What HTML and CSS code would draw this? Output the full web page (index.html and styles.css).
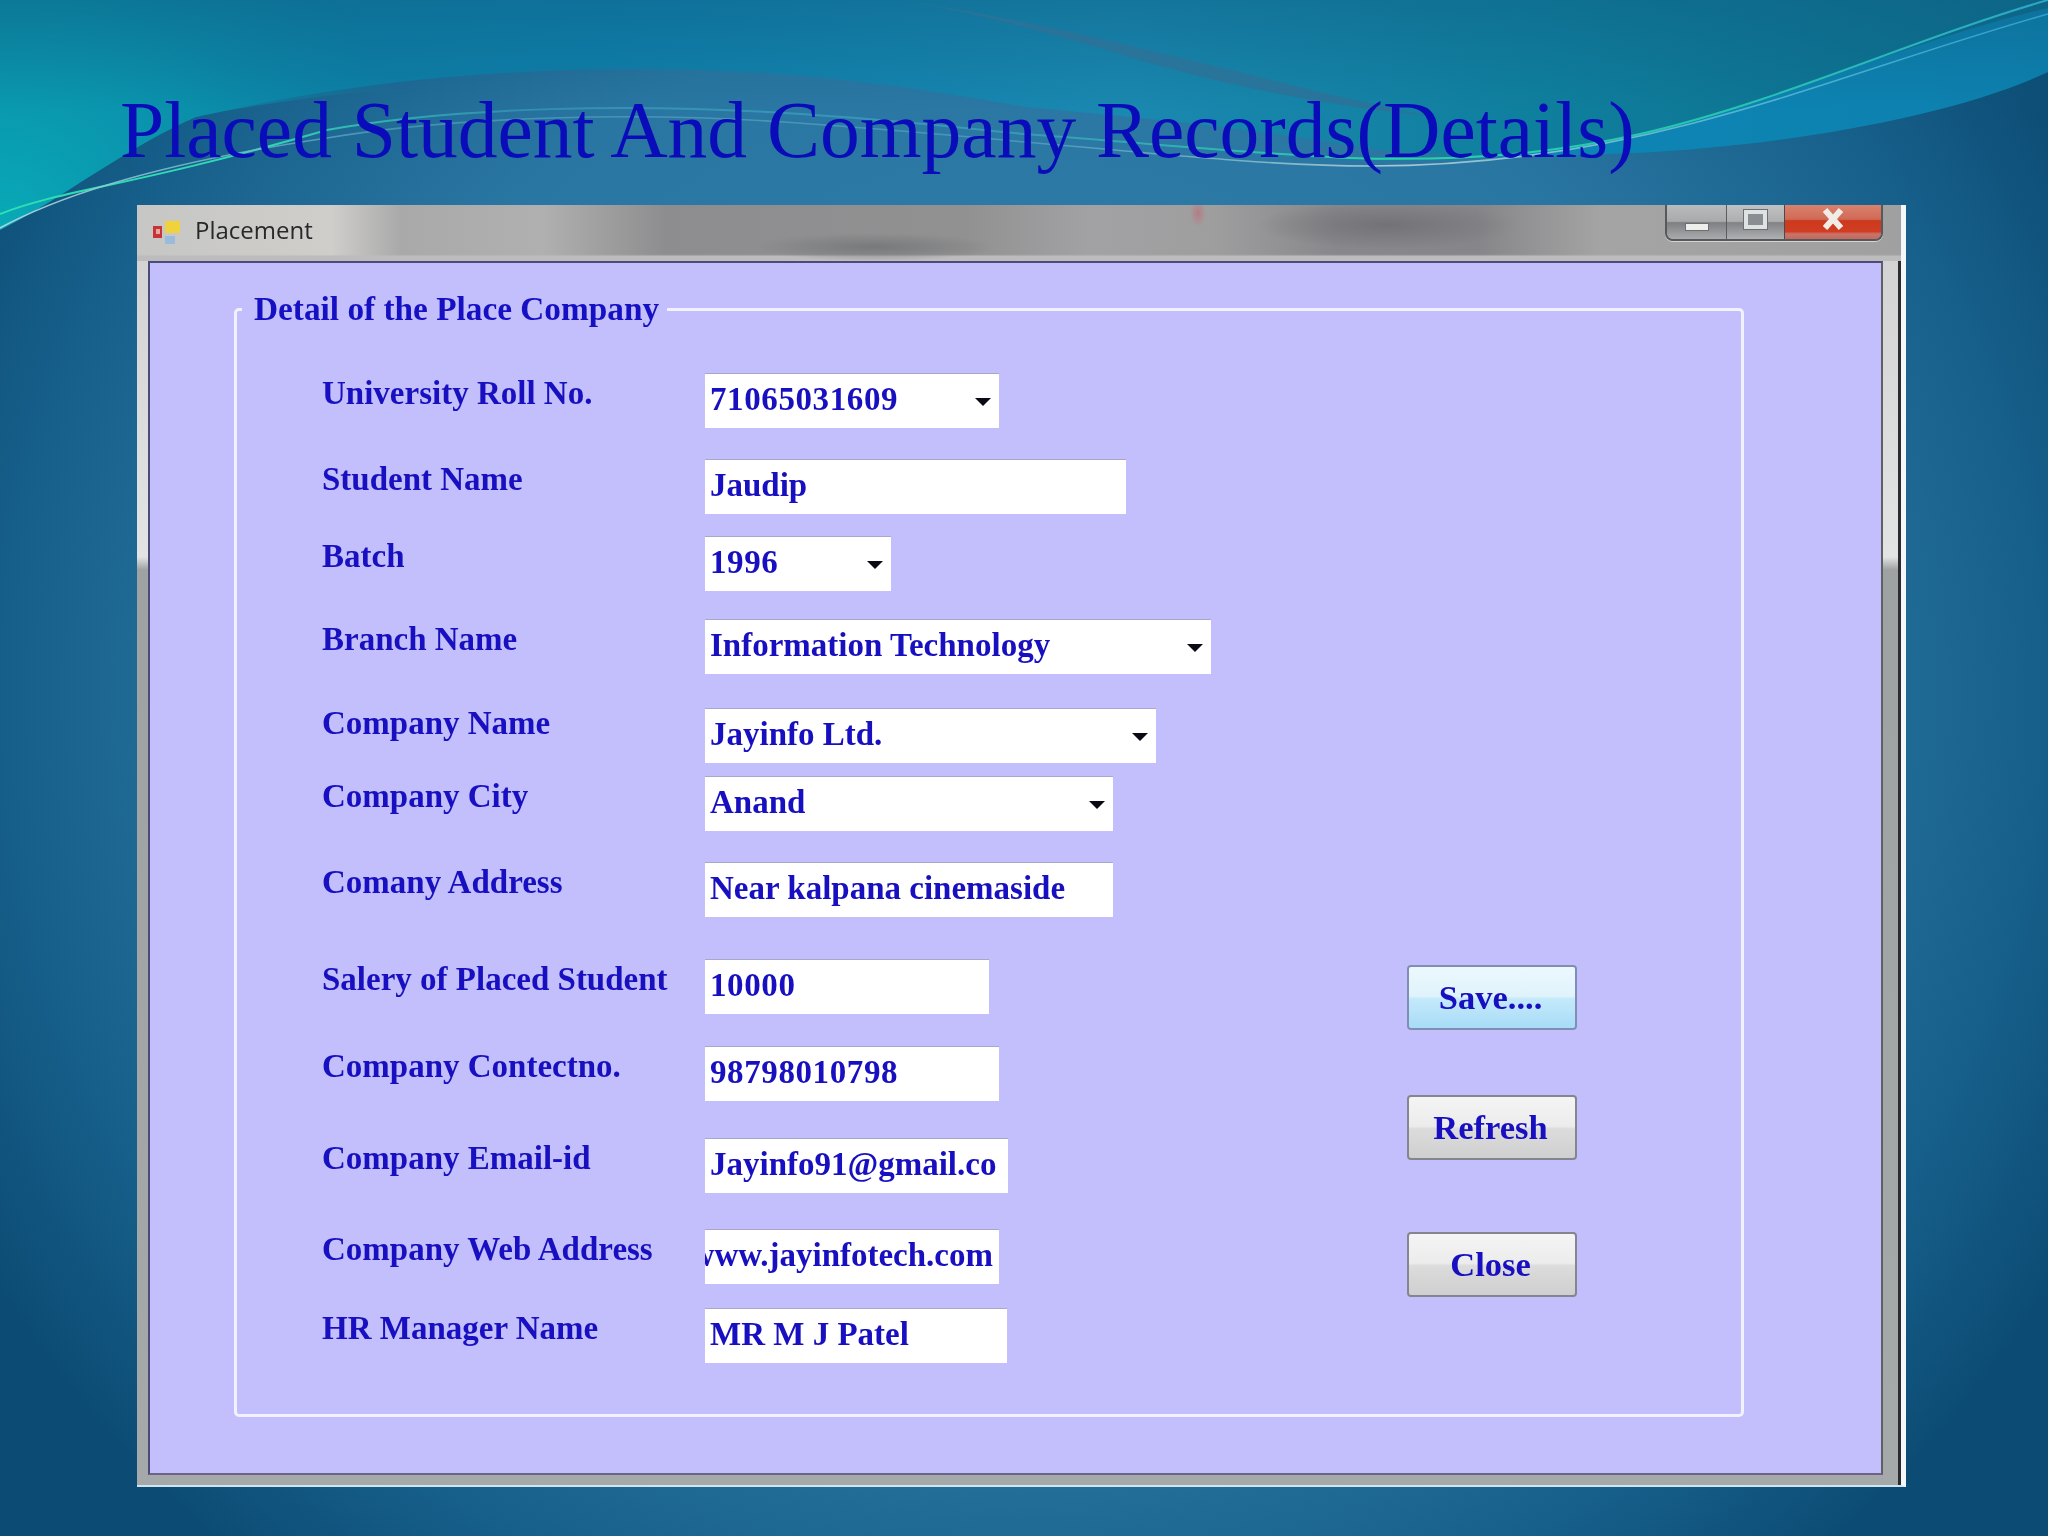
FILE: index.html
```html
<!DOCTYPE html>
<html lang="en">
<head>
<meta charset="utf-8">
<title>Placed Student And Company Records(Details)</title>
<link rel="stylesheet" href="styles.css">
</head>
<body>
<main class="slide">
  <svg class="backdrop" viewBox="0 0 2048 1536" preserveAspectRatio="none" aria-hidden="true">
    <defs>
      <linearGradient id="bandFill" gradientUnits="userSpaceOnUse" x1="0" y1="0" x2="2048" y2="0">
        <stop offset="0" stop-color="#0c7c9e"/>
        <stop offset="0.3" stop-color="#0e80ac"/>
        <stop offset="0.55" stop-color="#1a88b0"/>
        <stop offset="0.75" stop-color="#0f7f9e"/>
        <stop offset="1" stop-color="#0d6a88"/>
      </linearGradient>
      <radialGradient id="tealGlow" gradientUnits="userSpaceOnUse" cx="0" cy="230" r="420">
        <stop offset="0" stop-color="#08aab8" stop-opacity="1"/>
        <stop offset="0.55" stop-color="#0a96ae" stop-opacity="0.7"/>
        <stop offset="1" stop-color="#0a8aa8" stop-opacity="0"/>
      </radialGradient>
      <linearGradient id="topShade" gradientUnits="userSpaceOnUse" x1="0" y1="0" x2="0" y2="110">
        <stop offset="0" stop-color="#0e5f84" stop-opacity="0.45"/>
        <stop offset="1" stop-color="#0e5f84" stop-opacity="0"/>
      </linearGradient>
      <linearGradient id="lineA" gradientUnits="userSpaceOnUse" x1="0" y1="0" x2="2048" y2="0">
        <stop offset="0" stop-color="#2fe0b0"/>
        <stop offset="0.13" stop-color="#2fd8b4"/>
        <stop offset="0.25" stop-color="#3fa6c4" stop-opacity="0.55"/>
        <stop offset="0.5" stop-color="#3fb0c4" stop-opacity="0.6"/>
        <stop offset="0.68" stop-color="#25d6a8"/>
        <stop offset="0.85" stop-color="#25c4b0"/>
        <stop offset="1" stop-color="#2ba6c8"/>
      </linearGradient>
      <linearGradient id="lineB" gradientUnits="userSpaceOnUse" x1="0" y1="0" x2="2048" y2="0">
        <stop offset="0" stop-color="#a8d4dc"/>
        <stop offset="0.2" stop-color="#58a8c4" stop-opacity="0.6"/>
        <stop offset="0.5" stop-color="#5eaac8" stop-opacity="0.6"/>
        <stop offset="0.68" stop-color="#a4c8d4"/>
        <stop offset="0.85" stop-color="#4fb4d0"/>
        <stop offset="1" stop-color="#30a0cc"/>
      </linearGradient>
    </defs>
    <path d="M0 0H2048V72C1950 118 1780 146 1632 153C1500 158 1420 158 1330 142C1200 122 1080 112 1025 107C900 84 780 68 620 69C470 70 330 86 196 117C130 145 60 200 0 230Z" fill="url(#bandFill)"/>
    <path d="M1350 158C1470 162 1560 152 1640 134C1780 102 1910 40 2048 8V72C1950 118 1780 146 1632 153C1560 156 1450 160 1350 158Z" fill="#0d88bc" opacity="0.75"/>
    <path d="M0 0H900V60C700 60 330 86 196 117C130 145 60 200 0 230Z" fill="url(#tealGlow)"/>
    <path d="M0 0H2048V110H0Z" fill="url(#topShade)"/>
    <path d="M900 0C1100 30 1290 90 1430 116C1320 106 1200 80 1100 48C1040 30 970 12 900 0Z" fill="#2d7299" opacity="0.85"/>
    <path d="M0 214C60 190 130 187 327 130C460 106 640 104 784 113C900 120 960 128 1025 134C1180 146 1260 154 1350 158C1470 162 1560 152 1640 134C1780 102 1910 40 2048 0" fill="none" stroke="url(#lineA)" stroke-width="2"/>
    <path d="M0 228C70 190 180 160 327 138C460 116 640 112 784 122C900 130 980 138 1025 142C1180 156 1280 166 1370 166C1480 166 1590 150 1690 124C1820 90 1920 50 2048 14" fill="none" stroke="url(#lineB)" stroke-width="1.6"/>
  </svg>

  <header class="slide-head">
    <h1 class="slide-title">Placed Student And Company Records(Details)</h1>
  </header>

  <section class="window">
    <div class="titlebar">
      <svg class="app-icon" viewBox="0 0 27 27" aria-hidden="true">
        <rect x="0" y="7" width="9" height="12" fill="#c8333a"/>
        <rect x="3" y="10" width="4" height="5" fill="#e9a79c"/>
        <rect x="12" y="2" width="15" height="12" fill="#f0d33c"/>
        <rect x="12" y="17" width="10" height="8" fill="#9bbbdc"/>
      </svg>
      <span class="window-name">Placement</span>
      <div class="controls">
        <div class="ctl ctl-min"><span class="min-glyph"></span></div>
        <div class="ctl ctl-max"><span class="max-glyph"></span></div>
        <div class="ctl ctl-close">
          <svg class="close-glyph" viewBox="0 0 24 22" aria-hidden="true">
            <path d="M4 2L20 20M20 2L4 20" fill="none" stroke="#f1ece6" stroke-width="6"/>
          </svg>
        </div>
      </div>
    </div>

    <div class="client">
      <fieldset class="group">
        <legend class="group-title">Detail of the Place Company</legend>
        <div class="form">
          <div class="fields">
            <div class="row"><span class="label">University Roll No.</span><div class="box combo num w-294"><span>71065031609</span><i class="arrow"></i></div></div>
            <div class="row"><span class="label">Student Name</span><div class="box w-421"><span>Jaudip</span></div></div>
            <div class="row"><span class="label">Batch</span><div class="box combo num w-186"><span>1996</span><i class="arrow"></i></div></div>
            <div class="row"><span class="label">Branch Name</span><div class="box combo w-506"><span>Information Technology</span><i class="arrow"></i></div></div>
            <div class="row"><span class="label label-high">Company Name</span><div class="box combo w-451"><span>Jayinfo Ltd.</span><i class="arrow"></i></div></div>
            <div class="row"><span class="label">Company City</span><div class="box combo w-408"><span>Anand</span><i class="arrow"></i></div></div>
            <div class="row"><span class="label">Comany Address</span><div class="box w-408"><span>Near kalpana cinemaside</span></div></div>
            <div class="row"><span class="label">Salery of Placed Student</span><div class="box num w-284"><span>10000</span></div></div>
            <div class="row"><span class="label">Company Contectno.</span><div class="box num w-294"><span>98798010798</span></div></div>
            <div class="row"><span class="label">Company Email-id</span><div class="box w-303"><span>Jayinfo91@gmail.co</span></div></div>
            <div class="row"><span class="label">Company Web Address</span><div class="box box-end w-294"><span>www.jayinfotech.com</span></div></div>
            <div class="row"><span class="label">HR Manager Name</span><div class="box w-302"><span>MR M J Patel</span></div></div>
          </div>
          <div class="actions">
            <button class="btn btn-save" type="button">Save....</button>
            <button class="btn" type="button">Refresh</button>
            <button class="btn btn-close" type="button">Close</button>
          </div>
        </div>
      </fieldset>
    </div>
  </section>
</main>
</body>
</html>
```

FILE: styles.css
```css
* { box-sizing: border-box; }

html, body {
  margin: 0;
  padding: 0;
}

.slide {
  position: relative;
  width: 2048px;
  height: 1536px;
  overflow: hidden;
  background: radial-gradient(ellipse 1200px 1150px at 50% 45%, #2f80ac 0%, #2a76a2 60%, #165f8a 85%, #0c4c74 100%);
  font-family: "Liberation Serif", "Times New Roman", serif;
}

.backdrop {
  position: absolute;
  left: 0;
  top: 0;
  width: 2048px;
  height: 1536px;
}

.slide-head {
  position: relative;
  height: 205px;
  padding: 84px 0 0 120px;
}

.slide-title {
  margin: 0;
  font-size: 79.5px;
  line-height: 92px;
  font-weight: 400;
  color: #0b0cb9;
  white-space: nowrap;
  filter: blur(0.4px);
}

.window {
  position: relative;
  display: flex;
  flex-direction: column;
  width: 1769px;
  height: 1282px;
  margin-left: 137px;
  border-right: 5px solid #f4f8fa;
  border-bottom: 2px solid #cfe6ee;
  background: linear-gradient(180deg, #d0d0d0 0%, #e2e3e3 27.5%, #9fa2a2 28.5%, #a6a9a9 100%);
  box-shadow: inset -3px 0 0 #2c2c30;
  filter: blur(0.6px);
}

.titlebar {
  display: flex;
  align-items: center;
  height: 56px;
  flex: none;
  padding: 0 18px 0 16px;
  background:
    radial-gradient(ellipse 8px 14px at 1061px 8px, rgba(190, 110, 120, 0.7) 0%, rgba(190, 110, 120, 0) 100%),
    radial-gradient(ellipse 120px 14px at 737px 42px, #78797a 0%, rgba(120, 121, 122, 0) 100%),
    radial-gradient(ellipse 130px 24px at 1250px 20px, #737377 0%, rgba(115, 115, 119, 0) 100%),
    linear-gradient(180deg, rgba(185, 185, 185, 0) 0%, rgba(185, 185, 185, 0) 88%, #bcbcbc 92%, #bcbcbc 100%),
    linear-gradient(90deg, #c6c6c4 0%, #cfcecb 11%, #a9a9a9 15%, #b0b0b0 23%, #8d8d8f 30%, #919192 47%, #a2a2a4 54%, #9e9e9f 61%, #88888c 68%, #86868a 76%, #a4a4a4 83%, #a0a0a0 100%);
}

.app-icon {
  flex: none;
  width: 27px;
  height: 27px;
  margin-bottom: 2px;
}

.window-name {
  margin: 0 0 8px 15px;
  font-family: "Open Sans", "Noto Sans", sans-serif;
  font-size: 24px;
  color: #28282a;
}

.controls {
  display: flex;
  align-self: flex-start;
  height: 36px;
  margin-left: auto;
  border: 2px solid #55585c;
  border-top: 0;
  border-radius: 0 0 8px 8px;
  overflow: hidden;
  box-shadow: 0 1px 0 #d4d4d4;
}

.ctl {
  display: flex;
  align-items: center;
  justify-content: center;
  height: 100%;
}

.ctl-min {
  width: 60px;
  border-right: 1px solid #5a5c60;
  background: linear-gradient(180deg, #b9bbbd 0%, #a8aaac 48%, #7d7f82 52%, #a9abad 100%);
}

.ctl-max {
  width: 58px;
  border-right: 1px solid #4a4a4c;
  background: linear-gradient(180deg, #bfc1c3 0%, #adafb1 48%, #808285 52%, #aeb0b2 100%);
}

.ctl-close {
  width: 96px;
  background: linear-gradient(180deg, #d9826e 0%, #d06a56 42%, #cc3a1e 46%, #d23d22 78%, #c9746a 85%, #c46a5c 100%);
}

.min-glyph {
  width: 24px;
  height: 8px;
  margin-top: 10px;
  background: #eeeeec;
  border: 1px solid #6c7073;
}

.max-glyph {
  width: 23px;
  height: 19px;
  margin-top: -6px;
  border: 4px solid #dfe2e2;
  background: #8a8e92;
  box-shadow: 0 0 0 1px #6b6e72;
}

.close-glyph {
  width: 24px;
  height: 22px;
  margin-top: -6px;
}

.client {
  flex: 1;
  margin: 0 18px 10px 11px;
  padding: 28px 0 0 84px;
  border: 2px solid #4c4a78;
  border-right-color: #5f5f68;
  border-bottom-color: #6a6488;
  background: #c2bffc;
}

.group {
  width: 1510px;
  height: 1126px;
  margin: 0;
  padding: 47px 0 0 85px;
  border: 3px solid #f2f2fe;
  border-radius: 5px;
}

.group-title {
  margin-left: -80px;
  padding: 0 8px 0 12px;
  font-size: 33.3px;
  line-height: 36px;
  font-weight: 700;
  color: #1610c4;
}

.form {
  display: flex;
}

.fields {
  display: grid;
  width: 1085px;
  grid-template-rows: 86px 77px 83px 89px 68px 86px 97px 87px 92px 91px 79px 54px;
}

.row {
  display: flex;
  align-items: flex-start;
}

.label {
  flex: none;
  width: 383px;
  margin-top: 1px;
  font-size: 33px;
  line-height: 36px;
  font-weight: 700;
  color: #1810c0;
}

.label-high {
  margin-top: -4px;
}

.box {
  display: flex;
  align-items: center;
  justify-content: space-between;
  flex: none;
  height: 54px;
  padding: 0 8px 3px 5px;
  overflow: hidden;
  background: #ffffff;
  font-size: 33px;
  font-weight: 700;
  color: #1810c0;
  white-space: nowrap;
  box-shadow: 0 -1px 0 #a9a7c8;
}

.num {
  letter-spacing: 0.6px;
}

.box-end {
  justify-content: flex-end;
  padding-right: 6px;
}

.box span {
  flex: none;
}

.arrow {
  flex: none;
  width: 0;
  height: 0;
  margin-top: 5px;
  border-left: 8px solid transparent;
  border-right: 8px solid transparent;
  border-top: 8px solid #0a0a14;
}

.w-186 { width: 186px; }
.w-284 { width: 284px; }
.w-294 { width: 294px; }
.w-302 { width: 302px; }
.w-303 { width: 303px; }
.w-408 { width: 408px; }
.w-421 { width: 421px; }
.w-451 { width: 451px; }
.w-506 { width: 506px; }

.actions {
  display: flex;
  flex-direction: column;
  gap: 65px;
  padding-top: 591px;
}

.btn {
  width: 170px;
  height: 65px;
  padding: 0 3px 1px 0;
  border: 2px solid #85858f;
  border-radius: 4px;
  background: linear-gradient(180deg, #f4f4f4 0%, #ececec 48%, #dcdcdc 52%, #cfcfcf 100%);
  font-family: inherit;
  font-size: 34.5px;
  font-weight: 700;
  color: #1810c0;
}

.btn-save {
  border-color: #7f8fb4;
  background: linear-gradient(180deg, #edf8fe 0%, #dff3fb 48%, #c4e9fb 52%, #a8dcf7 100%);
}

.btn-close {
  margin-top: 7px;
}
```
